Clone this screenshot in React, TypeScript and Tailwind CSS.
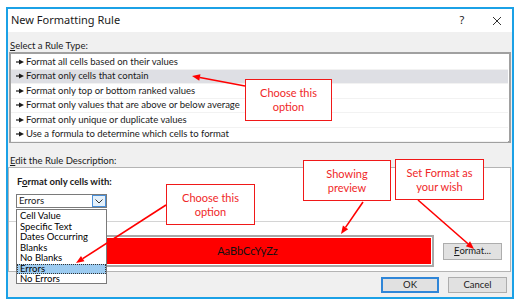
import React from "react";

const RED = "#ff0000";

function Arrow({ x1, y1, x2, y2 }: { x1: number; y1: number; x2: number; y2: number }) {
  const dx = x2 - x1;
  const dy = y2 - y1;
  const len = Math.sqrt(dx * dx + dy * dy);
  const ux = dx / len;
  const uy = dy / len;
  const L = 8;
  const W = 3.2;
  const bx = x2 - ux * L;
  const by = y2 - uy * L;
  const pts = `${x2},${y2} ${bx - uy * W},${by + ux * W} ${bx + uy * W},${by - ux * W}`;
  return (
    <g>
      <line x1={x1} y1={y1} x2={bx} y2={by} stroke={RED} strokeWidth={1.6} />
      <polygon points={pts} fill={RED} />
    </g>
  );
}

function Bullet() {
  return (
    <svg width="8" height="6" viewBox="0 0 8 6" className="shrink-0">
      <line x1="0" y1="3" x2="4" y2="3" stroke="#1a1a1a" strokeWidth="1.2" />
      <polygon points="3,0.5 8,3 3,5.5" fill="#1a1a1a" />
    </svg>
  );
}

const rules = [
  "Format all cells based on their values",
  "Format only cells that contain",
  "Format only top or bottom ranked values",
  "Format only values that are above or below average",
  "Format only unique or duplicate values",
  "Use a formula to determine which cells to format",
];

const options = ["Cell Value", "Specific Text", "Dates Occurring", "Blanks", "No Blanks", "Errors", "No Errors"];

function Note({ className, lines }: { className: string; lines: string[] }) {
  return (
    <div
      className={`absolute bg-white border-[1.5px] border-[#f01818] flex flex-col items-center justify-center text-[#f02828] text-[11px] leading-[14px] font-['Lato',sans-serif] ${className}`}
    >
      {lines.map((l) => (
        <div key={l}>{l}</div>
      ))}
    </div>
  );
}

export default function App() {
  return (
    <div className="relative w-[522px] h-[306px] bg-white pt-[7px] pl-[6px] font-['Lato',sans-serif] text-[#1a1a1a] overflow-hidden">
      <div className="w-[508px] h-[292px] border-2 border-[#1ba1e6] flex flex-col bg-[#f0f0f0]">
        {/* title bar */}
        <div className="h-[23px] bg-white flex items-center pl-[3px] text-[11px] font-['Noto_Sans',sans-serif]">
          <span>New Formatting Rule</span>
          <span className="ml-auto w-[14px] text-center text-[11px]">?</span>
          <span className="ml-[21px] mr-[8px] w-[14px] flex justify-center">
            <svg width="10" height="10" viewBox="0 0 10 10">
              <path d="M1 1 L9 9 M9 1 L1 9" stroke="#333" strokeWidth="1" />
            </svg>
          </span>
        </div>

        {/* body */}
        <div className="flex-1 flex flex-col pt-[7px] text-[9.5px]">
          <div className="h-[13px] leading-[13px] pl-[2px]">
            <span className="underline">S</span>elect a Rule Type:
          </div>
          <div className="ml-[1px] w-[502px] h-[91px] border-2 border-[#a0a0a0] bg-white pt-[1px]">
            {rules.map((r, i) => (
              <div
                key={r}
                className={`h-[14.5px] flex items-center gap-[2px] pl-[5px] mr-[1px] border-b border-[#f2f2f2] ${
                  i === 1 ? "bg-[#dedfe4]" : ""
                }`}
              >
                <Bullet />
                <span>{r}</span>
              </div>
            ))}
          </div>

          <div className="mt-[12px] h-[12px] leading-[12px] pl-[2px]">
            <span className="underline">E</span>dit the Rule Description:
          </div>
          <div className="w-[503px] h-[105px] border border-[#b4b4b4] bg-white flex flex-col">
            <div className="pt-[7px] pl-[8px] h-[13px] box-content leading-[13px] font-bold">
              F<span className="underline">o</span>rmat only cells with:
            </div>
            <div className="mt-[6px] ml-[7px] w-[91px] h-[14px] border border-[#7a7a7a] bg-white flex items-center">
              <span className="pl-[2px] flex-1">Errors</span>
              <span className="w-[14px] h-[12px] bg-[#e5f1fb] border border-[#4a90d9] flex items-center justify-center">
                <svg width="8" height="5" viewBox="0 0 8 5">
                  <path d="M0.5 0.5 L4 4 L7.5 0.5" stroke="#333" strokeWidth="1" fill="none" />
                </svg>
              </span>
            </div>
            <div className="mt-[13px] border-t border-[#d4d4d4]" />
            <div className="mt-[13px] flex items-center">
              <span className="w-[52px]" />
              <div className="w-[373px] h-[32px] border-2 border-[#a8a8a8] bg-white p-[1px]">
                <div className="w-full h-full bg-[#ff0000] flex items-center justify-center text-[11px] text-[#111]">
                  AaBbCcYyZz
                </div>
              </div>
              <div className="ml-[9px] w-[59px] h-[17px] bg-[#e1e1e1] border border-[#adadad] flex items-center justify-center">
                <span className="underline">F</span>ormat...
              </div>
            </div>
          </div>

          <div className="mt-[5px] flex justify-end gap-[9px] pr-[5px]">
            <div className="w-[58px] h-[16px] bg-[#e1e1e1] border-2 border-[#2f86d8] flex items-center justify-center">
              OK
            </div>
            <div className="w-[59px] h-[16px] bg-[#e1e1e1] border border-[#adadad] flex items-center justify-center">
              Cancel
            </div>
          </div>
        </div>
      </div>

      {/* open dropdown list */}
      <div className="absolute left-[16px] top-[209px] w-[91px] h-[75px] bg-white border border-[#7a7a7a] text-[9.5px] text-black pt-[1px]">
        {options.map((o) => (
          <div
            key={o}
            className={`h-[10.5px] leading-[10.5px] pl-[3px] ${
              o === "Errors" ? "bg-[#9ccbf0] outline-1 outline-dotted outline-[#333] -outline-offset-1" : ""
            }`}
          >
            {o}
          </div>
        ))}
      </div>

      {/* annotations */}
      <Note className="left-[245px] top-[79px] w-[87px] h-[42px]" lines={["Choose this", "option"]} />
      <Note className="left-[166px] top-[184px] w-[89px] h-[41px]" lines={["Choose this", "option"]} />
      <Note className="left-[303px] top-[160px] w-[88px] h-[41px]" lines={["Showing", "preview"]} />
      <Note className="left-[395px] top-[159px] w-[89px] h-[41px]" lines={["Set Format as", "your wish"]} />

      <svg className="absolute inset-0 pointer-events-none" width="522" height="306" viewBox="0 0 522 306">
        <Arrow x1={245} y1={86} x2={192} y2={76} />
        <Arrow x1={166} y1={205} x2={76} y2={263} />
        <Arrow x1={363} y1={202} x2={341} y2={234} />
        <Arrow x1={418} y1={200} x2={474} y2={249} />
      </svg>
    </div>
  );
}
